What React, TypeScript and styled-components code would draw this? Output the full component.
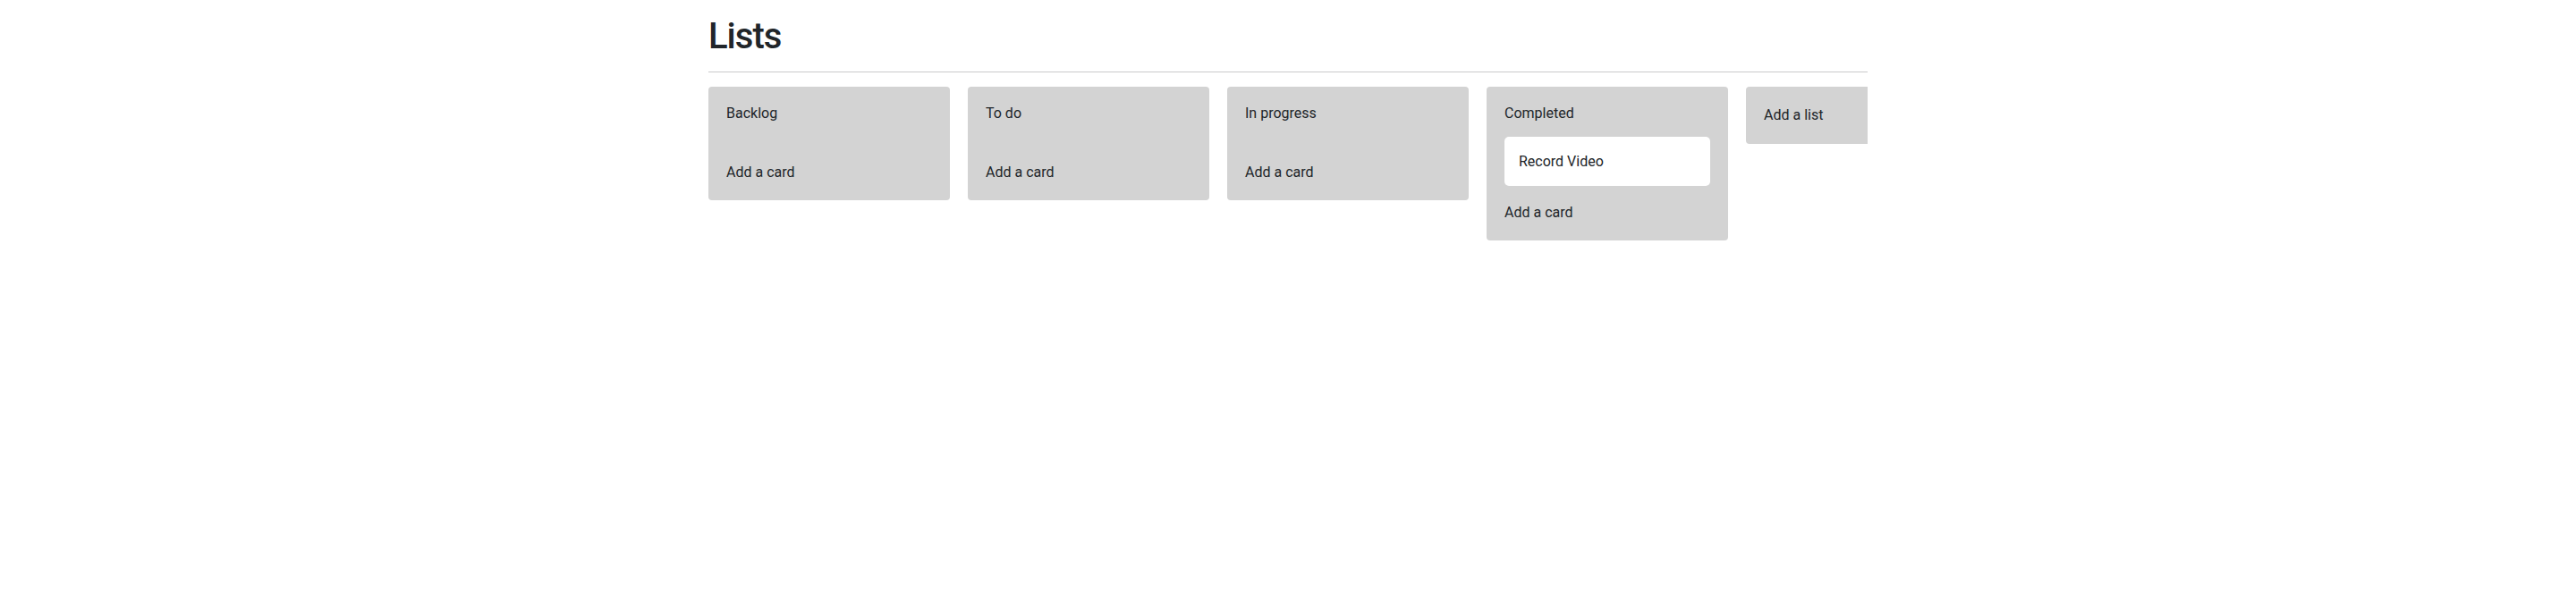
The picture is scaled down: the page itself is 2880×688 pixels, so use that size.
import React from 'react'
import styled, { createGlobalStyle } from 'styled-components'

const GlobalStyle = createGlobalStyle`
  * {
    box-sizing: border-box;
  }
  body {
    margin: 0;
    background: #ffffff;
    color: #212529;
    font-family: Roboto, 'Liberation Sans', Arial, sans-serif;
    font-size: 16px;
    line-height: 1.5;
  }
`

const Container = styled.div`
  width: 100%;
  max-width: 1320px;
  margin: 0 auto;
  padding: 0 12px;
`

const Title = styled.h1`
  font-size: 40px;
  font-weight: 500;
  line-height: 48px;
  letter-spacing: -1px;
  margin: 17px 0 15px;
`

const Divider = styled.hr`
  border: 0;
  border-top: 1px solid #c9cacb;
  margin: 0 0 16px;
`

const Board = styled.div`
  display: flex;
  align-items: flex-start;
  gap: 20px;
  overflow: hidden;
`

const Column = styled.div`
  flex: 0 0 270px;
  background: #d3d3d3;
  border-radius: 4px;
  padding: 18px 20px 19px;
`

const ColumnTitle = styled.div`
  margin-bottom: 14px;
`

const CardList = styled.div`
  min-height: 10px;
  display: flex;
  flex-direction: column;
  gap: 8px;
`

const Card = styled.div`
  background: #ffffff;
  border-radius: 5px;
  padding: 16px 16px 15px;
`

const AddCard = styled.div`
  margin-top: 18px;
  cursor: pointer;
`

const AddList = styled.div`
  flex: 0 0 270px;
  background: #d3d3d3;
  border-radius: 4px;
  padding: 20px;
  cursor: pointer;
`

interface IList {
  title: string
  cards: string[]
}

const lists: IList[] = [
  { title: 'Backlog', cards: [] },
  { title: 'To do', cards: [] },
  { title: 'In progress', cards: [] },
  { title: 'Completed', cards: ['Record Video'] },
]

const App: React.FC = () => {
  return (
    <>
      <GlobalStyle />
      <Container>
        <Title>Lists</Title>
        <Divider />
        <Board>
          {lists.map((list) => (
            <Column key={list.title}>
              <ColumnTitle>{list.title}</ColumnTitle>
              <CardList>
                {list.cards.map((card) => (
                  <Card key={card}>{card}</Card>
                ))}
              </CardList>
              <AddCard>Add a card</AddCard>
            </Column>
          ))}
          <AddList>Add a list</AddList>
        </Board>
      </Container>
    </>
  )
}

export default App
